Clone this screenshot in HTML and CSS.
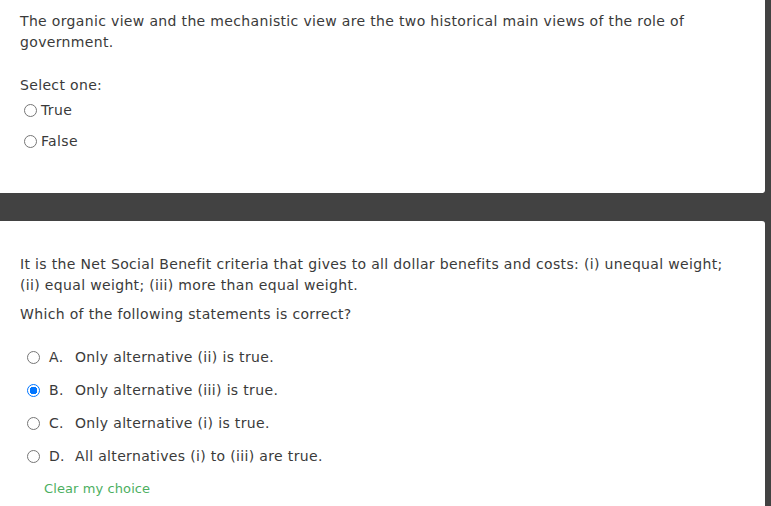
FILE: index.html
```html
<!DOCTYPE html>
<html>
<head>
<meta charset="utf-8">
<link rel="stylesheet" href="styles.css">
</head>
<body>
<div class="page">
  <section class="card card-top">
    <p class="qtext">The organic view and the mechanistic view are the two historical main views of the role of government.</p>
    <div class="prompt">Select one:</div>
    <div class="tf">
      <label class="tf-opt"><span class="radio"></span><span>True</span></label>
      <label class="tf-opt"><span class="radio"></span><span>False</span></label>
    </div>
  </section>
  <div class="gap"></div>
  <section class="card card-bottom">
    <p class="qtext q2">It is the Net Social Benefit criteria that gives to all dollar benefits and costs: (i) unequal weight; (ii) equal weight; (iii) more than equal weight.</p>
    <p class="which">Which of the following statements is correct?</p>
    <div class="answers">
      <div class="ans"><span class="radio"></span><span class="letter">A.</span><span>Only alternative (ii) is true.</span></div>
      <div class="ans"><span class="radio checked"></span><span class="letter">B.</span><span>Only alternative (iii) is true.</span></div>
      <div class="ans"><span class="radio"></span><span class="letter">C.</span><span>Only alternative (i) is true.</span></div>
      <div class="ans"><span class="radio"></span><span class="letter">D.</span><span>All alternatives (i) to (iii) are true.</span></div>
    </div>
    <a class="clear">Clear my choice</a>
  </section>
</div>
</body>
</html>
```

FILE: styles.css
```css
html, body {
  margin: 0;
  padding: 0;
  background: #424242;
  height: 100%;
  overflow: hidden;
}
body {
  font-family: "DejaVu Sans", Verdana, sans-serif;
  font-size: 14px;
  letter-spacing: 0.34px;
  color: #3a3a3a;
}
.page {
  display: flex;
  flex-direction: column;
  width: 765px;
}
.card {
  background: #fff;
  padding: 0 20px;
}
.card-top {
  height: 193px;
  box-sizing: border-box;
  padding-top: 11px;
  border-radius: 0 0 3px 0;
}
.gap {
  height: 28px;
}
.card-bottom {
  height: 285px;
  box-sizing: border-box;
  padding-top: 33px;
  border-radius: 0 3px 0 0;
}
.qtext {
  margin: 0;
  line-height: 21px;
}
.prompt {
  margin-top: 22px;
  line-height: 21px;
}
.tf {
  display: flex;
  flex-direction: column;
  gap: 10px;
  margin-top: 4px;
  padding-left: 4px;
}
.tf-opt {
  display: flex;
  align-items: center;
  gap: 4px;
  line-height: 21px;
}
.radio {
  width: 11px;
  height: 11px;
  border: 1px solid #767676;
  border-radius: 50%;
  box-sizing: content-box;
  flex: none;
}
.radio.checked {
  border: 1px solid #0075ff;
  background: radial-gradient(circle, #0075ff 0 3.6px, #fff 4px 6px);
}
.which {
  margin: 8px 0 0;
  line-height: 21px;
}
.answers {
  display: flex;
  flex-direction: column;
  gap: 12px;
  margin-top: 22px;
  padding-left: 7px;
}
.ans {
  display: flex;
  align-items: center;
  line-height: 21px;
}
.ans .radio {
  margin-right: 9px;
}
.letter {
  width: 26px;
}
.clear {
  display: block;
  margin-top: 11px;
  padding-left: 24px;
  color: #4caf5f;
  font-size: 13px;
  letter-spacing: 0.1px;
  line-height: 21px;
}
```
